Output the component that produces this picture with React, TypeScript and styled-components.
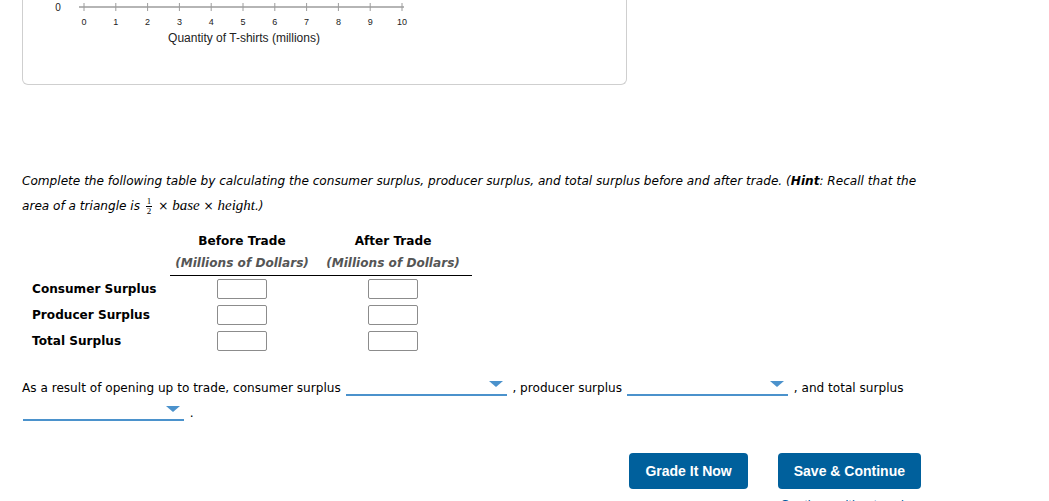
import React from 'react';
import styled, { createGlobalStyle } from 'styled-components';

const GlobalStyle = createGlobalStyle`
  html, body {
    margin: 0;
    padding: 0;
    background: #ffffff;
  }
  body {
    font-family: "DejaVu Sans", Verdana, sans-serif;
    font-size: 12.1px;
    color: #000;
  }
`;

const Page = styled.div`
  width: 1049px;
  height: 501px;
  overflow: hidden;
  padding-left: 22px;
  box-sizing: border-box;
`;

const Content = styled.div`
  width: 920px;
`;

const ChartPanel = styled.div`
  width: 605px;
  height: 85px;
  box-sizing: border-box;
  border: 1px solid #cfcfcf;
  border-top: none;
  border-radius: 0 0 6px 6px;
`;

const ChartSvg = styled.svg`
  display: block;
  font-family: "Liberation Sans", Arial, sans-serif;
`;

const Instructions = styled.p`
  margin: 84px 0 0;
  font-style: italic;
  line-height: 24px;
`;

const Fraction = styled.span`
  display: inline-flex;
  flex-direction: column;
  align-items: center;
  vertical-align: middle;
  font-family: "Liberation Serif", "Times New Roman", serif;
  font-style: normal;
  font-size: 9px;
  line-height: 9px;
  margin: 0 2px;

  & > span:first-child {
    border-bottom: 1px solid #000;
    padding: 0 1px;
  }
`;

const MathVar = styled.span`
  font-family: "Liberation Serif", "Times New Roman", serif;
  font-style: italic;
  font-size: 15px;
`;

const SurplusTable = styled.div`
  margin-top: 12px;
  width: 450px;
  display: grid;
  grid-template-columns: 148px 144px 158px;
`;

const HeaderCell = styled.div`
  display: flex;
  flex-direction: column;
  align-items: center;
  line-height: 22px;
  padding-bottom: 1px;
  border-bottom: 1px solid #000;
`;

const HeaderTitle = styled.span`
  font-weight: bold;
`;

const HeaderUnit = styled.span`
  font-weight: bold;
  font-style: italic;
  color: #555;
`;

const RowLabel = styled.div`
  height: 26px;
  display: flex;
  align-items: center;
  padding-left: 10px;
  font-weight: bold;
`;

const InputCell = styled.div`
  height: 26px;
  display: flex;
  align-items: center;
  justify-content: center;
`;

const AmountInput = styled.input`
  width: 50px;
  height: 20px;
  box-sizing: border-box;
  border: 1px solid #8c8c8c;
  border-radius: 2px;
  padding: 0;
`;

const Sentence = styled.p`
  margin: 22px 0 0;
  line-height: 25px;
`;

const Dropdown = styled.span`
  position: relative;
  display: inline-block;
  width: 161px;
  height: 16px;
  margin: 0 2px 0 1px;
  vertical-align: -4px;
  border-bottom: 2px solid #4b92cc;

  &::after {
    content: '';
    position: absolute;
    right: 4px;
    bottom: 7px;
    border-left: 7px solid transparent;
    border-right: 7px solid transparent;
    border-top: 6px solid #4b92cc;
  }
`;

const ButtonBar = styled.div`
  margin-top: 27px;
  display: flex;
  justify-content: flex-end;
  gap: 30px;
  padding-right: 128px;
`;

const ButtonGroup = styled.div`
  display: flex;
  flex-direction: column;
  align-items: center;
  gap: 8px;
`;

const ActionButton = styled.button`
  height: 36px;
  padding: 0 16px;
  border: none;
  border-radius: 4px;
  background: #00609c;
  color: #fff;
  font-family: "Liberation Sans", Helvetica, Arial, sans-serif;
  font-weight: bold;
  font-size: 14px;
  cursor: pointer;
`;

const SkipLink = styled.a`
  font-family: "Liberation Sans", Helvetica, Arial, sans-serif;
  font-size: 13px;
  color: #005a9c;
  text-decoration: none;
`;

const ticks = Array.from({ length: 11 }, (_, i) => i);

const QuantityAxis: React.FC = () => (
  <ChartSvg width="603" height="84" viewBox="0 0 603 84">
    <text x="35" y="7" fontSize="10" textAnchor="middle" dominantBaseline="central" fill="#222">0</text>
    <line x1="56" y1="7" x2="381" y2="7" stroke="#9c9c9c" strokeWidth="1.6" />
    {ticks.map((t) => {
      const x = 61 + t * 31.8;
      return (
        <g key={t}>
          <line x1={x} y1="3" x2={x} y2="11" stroke="#9c9c9c" strokeWidth="1" />
          <text x={x} y="22" fontSize="9" textAnchor="middle" dominantBaseline="central" fill="#222">
            {t}
          </text>
        </g>
      );
    })}
    <text x="221" y="38" fontSize="12" textAnchor="middle" dominantBaseline="central" fill="#222">
      Quantity of T-shirts (millions)
    </text>
  </ChartSvg>
);

const rows = ['Consumer Surplus', 'Producer Surplus', 'Total Surplus'];

const App: React.FC = () => {
  return (
    <Page>
      <GlobalStyle />
      <Content>
        <ChartPanel>
          <QuantityAxis />
        </ChartPanel>

        <Instructions>
          Complete the following table by calculating the consumer surplus, producer surplus, and total surplus before
          and after trade. (<b>Hint</b>: Recall that the area of a triangle is{' '}
          <Fraction>
            <span>1</span>
            <span>2</span>
          </Fraction>{' '}
          × <MathVar>base</MathVar> × <MathVar>height</MathVar>.)
        </Instructions>

        <SurplusTable>
          <div />
          <HeaderCell>
            <HeaderTitle>Before Trade</HeaderTitle>
            <HeaderUnit>(Millions of Dollars)</HeaderUnit>
          </HeaderCell>
          <HeaderCell>
            <HeaderTitle>After Trade</HeaderTitle>
            <HeaderUnit>(Millions of Dollars)</HeaderUnit>
          </HeaderCell>
          {rows.map((r) => (
            <React.Fragment key={r}>
              <RowLabel>{r}</RowLabel>
              <InputCell>
                <AmountInput type="text" />
              </InputCell>
              <InputCell>
                <AmountInput type="text" />
              </InputCell>
            </React.Fragment>
          ))}
        </SurplusTable>

        <Sentence>
          As a result of opening up to trade, consumer surplus <Dropdown /> , producer surplus <Dropdown /> , and total
          surplus <Dropdown /> .
        </Sentence>
      </Content>

      <ButtonBar>
        <ButtonGroup>
          <ActionButton>Grade It Now</ActionButton>
        </ButtonGroup>
        <ButtonGroup>
          <ActionButton>Save &amp; Continue</ActionButton>
          <SkipLink href="#">Continue without saving</SkipLink>
        </ButtonGroup>
      </ButtonBar>
    </Page>
  );
};

export default App;
